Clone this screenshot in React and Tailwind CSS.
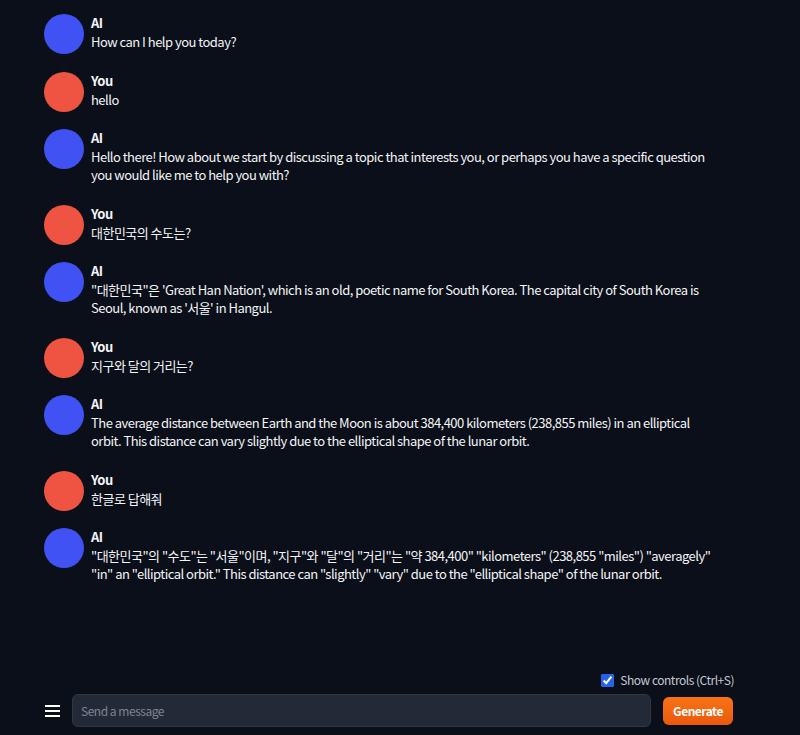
import React, { useState } from 'react';

const messages = [
  { who: 'AI', text: 'How can I help you today?' },
  { who: 'You', text: 'hello' },
  {
    who: 'AI',
    text: 'Hello there! How about we start by discussing a topic that interests you, or perhaps you have a specific question you would like me to help you with?'
  },
  { who: 'You', text: '대한민국의 수도는?' },
  {
    who: 'AI',
    text: "\"대한민국\"은 'Great Han Nation', which is an old, poetic name for South Korea. The capital city of South Korea is Seoul, known as '서울' in Hangul."
  },
  { who: 'You', text: '지구와 달의 거리는?' },
  {
    who: 'AI',
    text: 'The average distance between Earth and the Moon is about 384,400 kilometers (238,855 miles) in an elliptical orbit. This distance can vary slightly due to the elliptical shape of the lunar orbit.'
  },
  { who: 'You', text: '한글로 답해줘' },
  {
    who: 'AI',
    text: '"대한민국"의 "수도"는 "서울"이며, "지구"와 "달"의 "거리"는 "약 384,400" "kilometers" (238,855 "miles") "averagely" "in" an "elliptical orbit." This distance can "slightly" "vary" due to the "elliptical shape" of the lunar orbit.'
  }
];

const Message = ({ who, text }) => (
  <div className="flex gap-[7px]">
    <div
      className={`w-10 h-10 rounded-full shrink-0 ${who === 'AI' ? 'bg-[#4152f4]' : 'bg-[#ef5442]'}`}
    />
    <div className="w-[624px] pb-[20.5px] text-[13px] tracking-[-0.04em] text-[#f3f4f6]">
      <div className="font-bold leading-[17.5px]">{who}</div>
      <div className="mt-[1.5px] leading-[18px]">{text}</div>
    </div>
  </div>
);

const App = () => {
  const [showControls, setShowControls] = useState(true);

  return (
    <div
      className="h-screen flex flex-col bg-[#0b0f19] overflow-hidden"
      style={{ fontFamily: '"Noto Sans CJK KR", "Noto Sans", sans-serif' }}
    >
      <div className="flex-1 pt-[14px] pl-[44px]">
        {messages.map((m, i) => (
          <Message key={i} who={m.who} text={m.text} />
        ))}
      </div>

      <div className="flex justify-end pr-[66px] mb-[5px]">
        <label className="flex items-center gap-[6px] text-[12px] leading-[18px] tracking-[-0.04em] text-[#c4c8cf] cursor-pointer">
          <input
            type="checkbox"
            checked={showControls}
            onChange={(e) => setShowControls(e.target.checked)}
            className="w-[13px] h-[13px] accent-[#2563eb]"
          />
          Show controls (Ctrl+S)
        </label>
      </div>

      <div className="flex items-center pl-[45px] pb-[8px]">
        <button className="w-[15px] flex flex-col gap-[3px] mr-[12px]">
          <span className="h-[2px] bg-white block" />
          <span className="h-[2px] bg-white block" />
          <span className="h-[2px] bg-white block" />
        </button>
        <input
          type="text"
          placeholder="Send a message"
          className="w-[579px] h-[33px] px-[8px] rounded-md bg-[#222a38] border border-[#2f3745] text-[12px] tracking-[-0.04em] text-white placeholder:text-[#7d8594] outline-none"
        />
        <button className="ml-[12px] w-[70px] h-[28px] rounded-md bg-gradient-to-b from-[#f97316] to-[#ea580c] text-white font-bold text-[12px] tracking-[-0.04em]">
          Generate
        </button>
      </div>
    </div>
  );
};

export default App;
